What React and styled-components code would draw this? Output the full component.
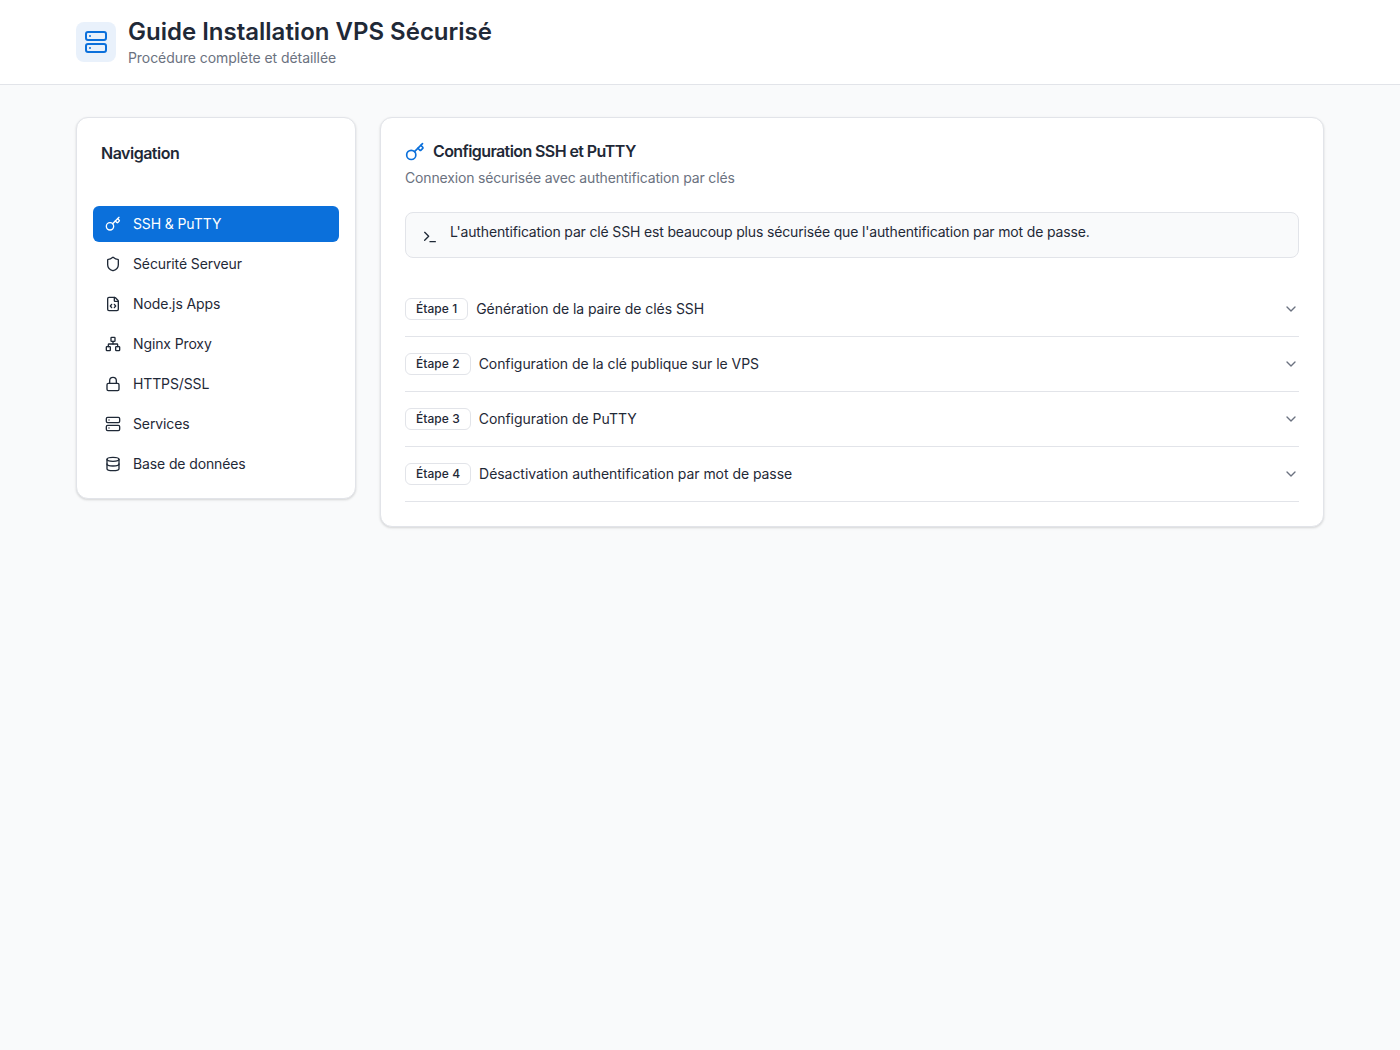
import { createGlobalStyle, styled } from "styled-components";
import {
  ChevronDown,
  Database,
  FileCode,
  Key,
  Lock,
  Network,
  Server,
  Shield,
  Terminal,
} from "lucide-react";

const GlobalStyle = createGlobalStyle`
  * { box-sizing: border-box; }
  html, body { margin: 0; padding: 0; }
  body {
    background: #f9fafb;
    color: #1f2937;
    font-family: "Inter", "Liberation Sans", sans-serif;
    min-height: 1050px;
  }
`;

const Header = styled.header`
  height: 85px;
  background: #ffffff;
  border-bottom: 1px solid #e2e4e9;
  padding: 0 76px;
  display: flex;
  align-items: center;
`;

const Brand = styled.div`
  display: flex;
  align-items: center;
  gap: 12px;
`;

const BrandIcon = styled.div`
  width: 40px;
  height: 40px;
  border-radius: 8px;
  background: #e9f1fb;
  color: #0b70db;
  display: flex;
  align-items: center;
  justify-content: center;
`;

const Title = styled.h1`
  margin: 0;
  font-size: 24px;
  line-height: 32px;
  font-weight: 600;
  color: #1f2937;
`;

const Subtitle = styled.p`
  margin: 0;
  font-size: 14px;
  line-height: 20px;
  color: #6b7280;
  letter-spacing: -0.07px;
`;

const Layout = styled.main`
  padding: 32px 76px;
  display: flex;
  align-items: flex-start;
  gap: 24px;
`;

const Card = styled.div`
  background: #ffffff;
  border: 1px solid #e2e4e9;
  border-radius: 12px;
  box-shadow: 0 1px 3px rgba(0, 0, 0, 0.1), 0 1px 2px rgba(0, 0, 0, 0.06);
`;

const Sidebar = styled(Card)`
  width: 280px;
  flex-shrink: 0;
  height: 382px;
  padding: 24px 16px 0;
`;

const SidebarTitle = styled.h2`
  margin: 0 0 42px 8px;
  font-size: 16px;
  line-height: 22px;
  font-weight: 600;
  color: #1f2937;
  letter-spacing: -0.5px;
`;

const NavList = styled.nav`
  display: flex;
  flex-direction: column;
  gap: 4px;
`;

const NavItem = styled.a`
  height: 36px;
  padding: 0 12px;
  border-radius: 6px;
  display: flex;
  align-items: center;
  gap: 12px;
  font-size: 14px;
  letter-spacing: -0.12px;
  background: ${(p) => (p.$active ? "#0b70db" : "transparent")};
  color: ${(p) => (p.$active ? "#ffffff" : "#1f2937")};
`;

const NavLabel = styled.span`
  margin-bottom: 2px;
`;

const Content = styled(Card)`
  flex: 1;
  padding: 24px;
`;

const ContentHead = styled.div`
  height: 20px;
  display: flex;
  align-items: center;
  gap: 8px;
  color: #0b70db;
`;

const ContentTitle = styled.h2`
  margin: 0 0 2px;
  font-size: 16px;
  line-height: 20px;
  font-weight: 600;
  color: #1f2937;
  letter-spacing: -0.6px;
`;

const ContentDesc = styled.p`
  margin: 6px 0 0;
  font-size: 14px;
  line-height: 20px;
  color: #6b7280;
  letter-spacing: -0.16px;
`;

const Notice = styled.div`
  margin-top: 24px;
  height: 46px;
  padding: 0 16px;
  background: #f9fafb;
  border: 1px solid #e2e4e9;
  border-radius: 8px;
  display: flex;
  align-items: flex-start;
  gap: 12px;
  font-size: 14px;
  line-height: 20px;
  color: #1f2937;
  letter-spacing: -0.16px;
`;

const NoticeIcon = styled.span`
  display: flex;
  margin-top: 16px;
`;

const NoticeText = styled.span`
  margin-top: 9px;
`;

const Steps = styled.div`
  margin-top: 24px;
`;

const Step = styled.div`
  height: 55px;
  border-bottom: 1px solid #e2e4e9;
  display: flex;
  align-items: center;
  gap: 8px;
  font-size: 14px;
  color: #1f2937;
`;

const StepBadge = styled.span`
  height: 22px;
  padding: 0 10px 2px;
  border: 1px solid #e2e4e9;
  border-radius: 6px;
  display: flex;
  align-items: center;
  font-size: 12px;
  font-weight: 500;
  letter-spacing: 0.05px;
`;

const StepLabel = styled.span`
  margin-bottom: 2px;
  letter-spacing: -0.05px;
`;

const StepChevron = styled(ChevronDown)`
  margin-left: auto;
  color: #6b7280;
`;

const navItems = [
  { label: "SSH & PuTTY", icon: Key, active: true },
  { label: "Sécurité Serveur", icon: Shield },
  { label: "Node.js Apps", icon: FileCode },
  { label: "Nginx Proxy", icon: Network },
  { label: "HTTPS/SSL", icon: Lock },
  { label: "Services", icon: Server },
  { label: "Base de données", icon: Database },
];

const steps = [
  "Génération de la paire de clés SSH",
  "Configuration de la clé publique sur le VPS",
  "Configuration de PuTTY",
  "Désactivation authentification par mot de passe",
];

export default function App() {
  return (
    <>
      <GlobalStyle />
      <Header>
        <Brand>
          <BrandIcon>
            <Server size={24} strokeWidth={2} />
          </BrandIcon>
          <div>
            <Title>Guide Installation VPS Sécurisé</Title>
            <Subtitle>Procédure complète et détaillée</Subtitle>
          </div>
        </Brand>
      </Header>
      <Layout>
        <Sidebar>
          <SidebarTitle>Navigation</SidebarTitle>
          <NavList>
            {navItems.map(({ label, icon: Icon, active }) => (
              <NavItem key={label} $active={active}>
                <Icon size={16} />
                <NavLabel>{label}</NavLabel>
              </NavItem>
            ))}
          </NavList>
        </Sidebar>
        <Content>
          <ContentHead>
            <Key size={20} />
            <ContentTitle>Configuration SSH et PuTTY</ContentTitle>
          </ContentHead>
          <ContentDesc>Connexion sécurisée avec authentification par clés</ContentDesc>
          <Notice>
            <NoticeIcon>
              <Terminal size={16} />
            </NoticeIcon>
            <NoticeText>
              L'authentification par clé SSH est beaucoup plus sécurisée que l'authentification par mot de passe.
            </NoticeText>
          </Notice>
          <Steps>
            {steps.map((step, i) => (
              <Step key={step}>
                <StepBadge>Étape {i + 1}</StepBadge>
                <StepLabel>{step}</StepLabel>
                <StepChevron size={16} />
              </Step>
            ))}
          </Steps>
        </Content>
      </Layout>
    </>
  );
}
